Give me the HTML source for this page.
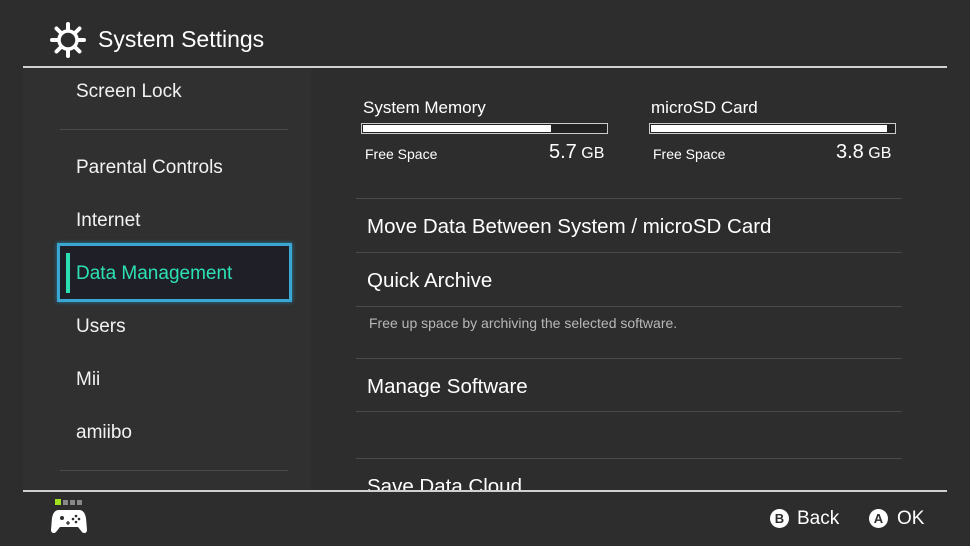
<!DOCTYPE html>
<html><head><style>
body{margin:0;width:970px;height:546px;background:#2d2d2d;font-family:"Liberation Sans",sans-serif;color:#fff;position:relative;overflow:hidden}
.a{position:absolute}
.t{font-size:19px;color:#f2f2f2;white-space:nowrap}
.line{position:absolute;height:1px;background:#4a4a4a}
</style></head><body>
<div class="a" style="left:23px;top:67px;width:288px;height:424px;background:#303030"></div>
<svg class="a" style="left:50px;top:22px" width="36" height="36" viewBox="0 0 36 36">
<g stroke="#fff" stroke-width="4" stroke-linecap="round">
<line x1="18" y1="2" x2="18" y2="8"/><line x1="18" y1="28" x2="18" y2="34"/>
<line x1="2" y1="18" x2="8" y2="18"/><line x1="28" y1="18" x2="34" y2="18"/>
<line x1="6.5" y1="6.5" x2="10.5" y2="10.5"/><line x1="25.5" y1="25.5" x2="29.5" y2="29.5"/>
<line x1="6.5" y1="29.5" x2="10.5" y2="25.5"/><line x1="25.5" y1="10.5" x2="29.5" y2="6.5"/>
</g><circle cx="18" cy="18" r="9" fill="none" stroke="#fff" stroke-width="3.5"/></svg>
<div class="a" style="left:98px;top:26px;font-size:23px;color:#fff">System Settings</div>
<div class="a" style="left:23px;top:66px;width:924px;height:2px;background:#d0d0d0"></div>

<div class="a t" style="left:76px;top:81px">Screen Lock</div>
<div class="line" style="left:60px;top:129px;width:228px"></div>
<div class="a t" style="left:76px;top:157px">Parental Controls</div>
<div class="a t" style="left:76px;top:210px">Internet</div>
<div class="a" style="left:57px;top:243px;width:229px;height:53px;border:3px solid #3aa6d2;background:#1f2027;box-shadow:0 0 4px #2a7fa8"></div>
<div class="a" style="left:66px;top:253px;width:4px;height:40px;background:#2de0b2"></div>
<div class="a t" style="left:76px;top:263px;color:#2ee0b5">Data Management</div>
<div class="a t" style="left:76px;top:316px">Users</div>
<div class="a t" style="left:76px;top:369px">Mii</div>
<div class="a t" style="left:76px;top:422px">amiibo</div>
<div class="line" style="left:60px;top:470px;width:228px"></div>

<div class="a" style="left:363px;top:98px;font-size:17px">System Memory</div>
<div class="a" style="left:361px;top:123px;width:245px;height:9px;border:1px solid #ccc;background:#222"><div style="margin:1px;width:188px;height:7px;background:#fff"></div></div>
<div class="a" style="left:365px;top:146px;font-size:14px">Free Space</div>
<div class="a" style="left:549px;top:141px;font-size:20px">5.7<span style="font-size:16px"> GB</span></div>
<div class="a" style="left:651px;top:98px;font-size:17px">microSD Card</div>
<div class="a" style="left:649px;top:123px;width:245px;height:9px;border:1px solid #ccc;background:#222"><div style="margin:1px;width:236px;height:7px;background:#fff"></div></div>
<div class="a" style="left:653px;top:146px;font-size:14px">Free Space</div>
<div class="a" style="left:836px;top:141px;font-size:20px">3.8<span style="font-size:16px"> GB</span></div>

<div class="line" style="left:356px;top:198px;width:546px"></div>
<div class="a" style="left:367px;top:215px;font-size:20.5px">Move Data Between System / microSD Card</div>
<div class="line" style="left:356px;top:252px;width:546px"></div>
<div class="a" style="left:367px;top:269px;font-size:20.5px">Quick Archive</div>
<div class="line" style="left:356px;top:306px;width:546px"></div>
<div class="a" style="left:369px;top:315px;font-size:14px;color:#b8b8b8">Free up space by archiving the selected software.</div>
<div class="line" style="left:356px;top:358px;width:546px"></div>
<div class="a" style="left:367px;top:375px;font-size:20.5px">Manage Software</div>
<div class="line" style="left:356px;top:411px;width:546px"></div>
<div class="line" style="left:356px;top:458px;width:546px"></div>
<div class="a" style="left:367px;top:475px;font-size:20.5px;height:16px;overflow:hidden">Save Data Cloud</div>

<div class="a" style="left:23px;top:490px;width:924px;height:2px;background:#d0d0d0"></div>
<div class="a" style="left:55px;top:499px;width:6px;height:6px;background:#a0e020"></div>
<div class="a" style="left:63px;top:500px;width:5px;height:5px;background:#888"></div>
<div class="a" style="left:70px;top:500px;width:5px;height:5px;background:#888"></div>
<div class="a" style="left:77px;top:500px;width:5px;height:5px;background:#888"></div>
<svg class="a" style="left:51px;top:508px" width="36" height="26" viewBox="0 0 36 26">
<path d="M8 2h20c4 0 6 3 7 8l1 12c0 3-3 4-5 2l-4-5H9l-4 5c-2 2-5 1-5-2l1-12C2 5 4 2 8 2z" fill="#fff"/>
<circle cx="11" cy="10" r="2" fill="#2d2d2d"/><circle cx="25" cy="8" r="1.3" fill="#2d2d2d"/><circle cx="28" cy="11" r="1.3" fill="#2d2d2d"/><circle cx="22" cy="11" r="1.3" fill="#2d2d2d"/><circle cx="25" cy="14" r="1.3" fill="#2d2d2d"/>
<path d="M15 15h4M17 13v4" stroke="#2d2d2d" stroke-width="1.3"/></svg>
<div class="a" style="left:770px;top:509px;width:19px;height:19px;border-radius:50%;background:#fff;color:#2d2d2d;font-size:13px;font-weight:bold;text-align:center;line-height:19px">B</div>
<div class="a" style="left:797px;top:508px;font-size:19px">Back</div>
<div class="a" style="left:869px;top:509px;width:19px;height:19px;border-radius:50%;background:#fff;color:#2d2d2d;font-size:13px;font-weight:bold;text-align:center;line-height:19px">A</div>
<div class="a" style="left:897px;top:508px;font-size:19px">OK</div>
</body></html>
